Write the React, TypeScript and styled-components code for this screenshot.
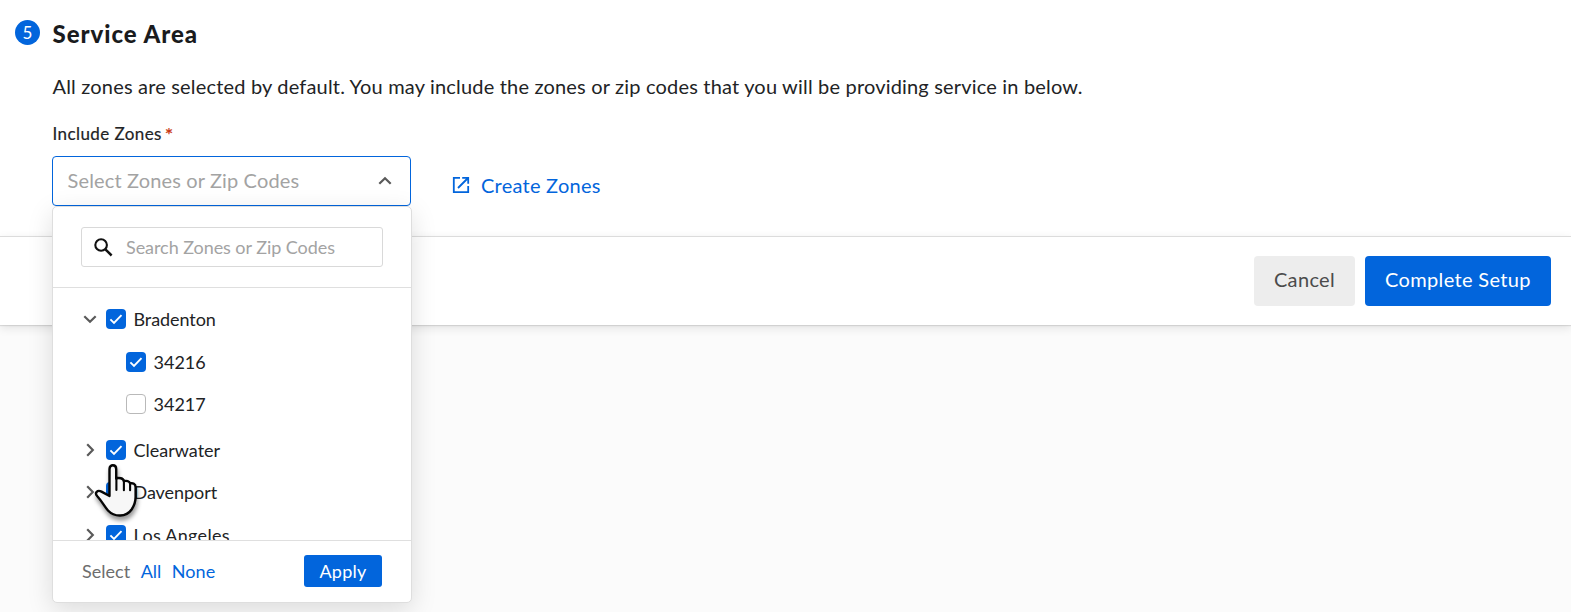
import React from 'react';
import styled, { createGlobalStyle } from 'styled-components';

const blue = '#0265dc';

const GlobalStyle = createGlobalStyle`
  * { box-sizing: border-box; }
  html, body { margin: 0; height: 100%; overflow: hidden; }
  body {
    background: #fbfbfb;
    color: #222325;
    font-family: Lato, 'Open Sans', sans-serif;
    font-size: 18px;
  }
  button, input { font: inherit; letter-spacing: inherit; }
`;

const Page = styled.main`
  height: 612px;
  display: flex;
  flex-direction: column;
  overflow: hidden;
`;

const Section = styled.section`
  height: 236px;
  flex: none;
  background: #fff;
  padding: 19px 15px 0;
  display: grid;
  grid-template-columns: 25px 1fr;
  column-gap: 12.5px;
  align-items: start;
`;

const StepBadge = styled.span`
  width: 25px;
  height: 25px;
  margin-top: 0.5px;
  border-radius: 50%;
  background: ${blue};
  color: #fff;
  display: grid;
  place-items: center;
  font-size: 17px;
  line-height: 25px;
`;

const Title = styled.h2`
  margin: 0;
  color: #1a1b1d;
  font-size: 24px;
  line-height: 30px;
  font-weight: 900;
  letter-spacing: 0.95px;
`;

const Description = styled.p`
  margin: 22px 0 0;
  font-size: 20px;
  line-height: 30px;
  letter-spacing: 0.18px;
  white-space: nowrap;
`;

const FieldLabel = styled.label`
  display: block;
  margin-top: 21px;
  font-size: 17px;
  line-height: 24px;
  letter-spacing: 0.42px;
  -webkit-text-stroke: 0.2px currentColor;
`;

const Required = styled.span`
  color: #c9310c;
  font-size: 20px;
  line-height: 1;
  margin-left: 3px;
  vertical-align: -1.5px;
`;

const FieldRow = styled.div`
  display: flex;
  align-items: flex-start;
  height: 50px;
  margin-top: 10px;
  margin-left: -0.5px;
`;

const SelectWrap = styled.div`
  position: relative;
  width: 359px;
`;

const SelectBox = styled.button`
  width: 100%;
  height: 50px;
  border: 1.5px solid ${blue};
  border-radius: 4px;
  background: #fff;
  padding: 0 18px 3px 14.5px;
  display: flex;
  align-items: center;
  justify-content: space-between;
  font-size: 20px;
  letter-spacing: 0.14px;
  color: #a3a3a3;

  svg { margin-top: 2px; }
`;

const CreateLink = styled.a`
  margin: 15px 0 0 41px;
  display: flex;
  align-items: center;
  gap: 11px;
  color: ${blue};
  font-size: 20px;
  line-height: 28px;
  letter-spacing: 0.25px;
`;

const Menu = styled.div`
  position: absolute;
  z-index: 2;
  top: 50px;
  left: 0;
  width: 360px;
  height: 397px;
  background: #fff;
  border: 1px solid #dedede;
  border-radius: 5px;
  box-shadow: 0 7px 26px rgba(0, 0, 0, 0.13);
  display: flex;
  flex-direction: column;
`;

const SearchArea = styled.div`
  flex: none;
  height: 81px;
  padding: 20px 28px 0;
  border-bottom: 1.5px solid #dfdfdf;
`;

const SearchField = styled.div`
  height: 40px;
  border: 1px solid #d9d9d9;
  border-radius: 3px;
  display: flex;
  align-items: center;
  gap: 13px;
  padding-left: 12px;
  color: #a3a3a3;
  letter-spacing: -0.06px;
`;

const ZoneList = styled.div`
  flex: 1;
  min-height: 0;
  overflow: hidden;
  padding-top: 10px;
`;

const ZipList = styled.div`
  padding-bottom: 3px;
`;

const Row = styled.div<{ $nested?: boolean; $tracking?: number }>`
  height: 42.5px;
  display: flex;
  align-items: center;
  padding-left: ${p => (p.$nested ? 73 : 28)}px;
  letter-spacing: ${p => p.$tracking ?? 0}px;
`;

const Toggle = styled.span`
  width: 18px;
  height: 18px;
  display: grid;
  place-items: center;
  margin-right: 7px;
`;

const Check = styled.span<{ $on: boolean }>`
  width: 20px;
  height: 20px;
  border-radius: 4px;
  margin-right: 7.5px;
  display: grid;
  place-items: center;
  background: ${p => (p.$on ? blue : '#fff')};
  border: ${p => (p.$on ? 'none' : '1.3px solid #b9b9b9')};
`;

const MenuFooter = styled.div`
  flex: none;
  height: 62px;
  border-top: 1.5px solid #dfdfdf;
  padding: 0 29px 1px;
  display: flex;
  align-items: center;
  color: #6d6d6d;
  letter-spacing: 0.02px;
`;

const Shortcut = styled.a`
  color: ${blue};
  margin-left: 10.5px;
`;

const Apply = styled.button`
  margin-left: auto;
  width: 78px;
  height: 32px;
  padding: 0;
  border: 0;
  border-radius: 3px;
  background: ${blue};
  color: #fff;
  letter-spacing: 0.25px;
`;

const ActionBar = styled.footer`
  flex: none;
  height: 89px;
  background: #fff;
  border-top: 1px solid #dcdcdc;
  box-shadow: 0 1px 1px rgba(0, 0, 0, 0.1), 0 3px 9px rgba(0, 0, 0, 0.1);
  display: flex;
  justify-content: flex-end;
  align-items: flex-start;
  gap: 10px;
  padding: 19px 20px 0;
`;

const ActionButton = styled.button<{ $primary?: boolean }>`
  height: 50px;
  width: ${p => (p.$primary ? 186 : 101)}px;
  padding: 0 0 4px;
  border: 0;
  border-radius: 4px;
  font-size: 20px;
  letter-spacing: 0.35px;
  background: ${p => (p.$primary ? blue : '#ededed')};
  color: ${p => (p.$primary ? '#fff' : '#4b4b4b')};
`;

const Cursor = styled.svg`
  position: absolute;
  z-index: 3;
  left: 37px;
  top: 253px;
  overflow: visible;
  filter: drop-shadow(1px 4px 2px rgba(0, 0, 0, 0.4));
`;

const Chevron = ({ dir }: { dir: 'up' | 'down' | 'right' }) => (
  <svg width="14" height="14" viewBox="0 0 14 14" fill="none" stroke="#5a5a5a" strokeWidth="2.2">
    <path d={{ up: 'M1.3 9.8 7 4.2l5.7 5.6', down: 'M1.3 4.2 7 9.8l5.7-5.6', right: 'M4.2 1.3 9.8 7l-5.6 5.7' }[dir]} />
  </svg>
);

const CheckBox = ({ on }: { on: boolean }) => (
  <Check $on={on}>
    {on && (
      <svg width="20" height="20" viewBox="0 0 20 20" fill="none" stroke="#fff" strokeWidth="1.9">
        <path d="m4.4 10.400 3.600 3.500 7.500-7.700" />
      </svg>
    )}
  </Check>
);

const SearchIcon = () => (
  <svg width="19" height="19" viewBox="0 0 19 19" fill="none" stroke="#111">
    <circle cx="7.1" cy="7" r="5.8" strokeWidth="2.1" />
    <path d="m11.4 11.3 6.2 6.2" strokeWidth="2.5" />
  </svg>
);

const OpenIcon = () => (
  <svg width="18" height="18" viewBox="0 0 18 18" fill="none" stroke={blue} strokeWidth="1.8">
    <path d="M8 1.8H1.8v14.4h14.4V10M10.2 1.8h6v6M16 2 6 12" />
  </svg>
);

const HandCursor = () => (
  <Cursor width="56" height="60" viewBox="0 0 56 60" stroke="#050505" strokeLinejoin="round" strokeLinecap="round">
    <path
      d="M19.5 36V9c0-5 6.7-5 6.7 0v9.500c2.500-1.100 7.200-.5 7.700 2.700 2.500-.8 5.500-.2 6.200 2.200 2.700-.7 5.500.5 5.500 3.800V37c0 5.500-1.700 9-4 12.500C36 57.500 24.500 57.300 18 50.500 14.500 46.800 12.500 42 7.300 36.300c-3.200-3.700.2-6.700 4.200-4.700Z"
      fill="#f7f7f7"
      strokeWidth="2.4"
    />
    <path d="M26.4 17v13M33.9 21.2V30.2M40.1 23.500V30.2" fill="none" strokeWidth="2.1" />
  </Cursor>
);

type Zone = { name: string; tracking: number; open?: boolean; zips?: { code: string; on: boolean }[] };

const zones: Zone[] = [
  { name: 'Bradenton', tracking: -0.08, open: true, zips: [{ code: '34216', on: true }, { code: '34217', on: false }] },
  { name: 'Clearwater', tracking: 0 },
  { name: 'Davenport', tracking: -0.06 },
  { name: 'Los Angeles', tracking: 0.3 },
];

export default function App() {
  return (
    <Page>
      <GlobalStyle />
      <Section>
        <StepBadge>5</StepBadge>
        <div>
          <Title>Service Area</Title>
          <Description>
            All zones are selected by default. You may include the zones or zip codes that you will be providing service in below.
          </Description>
          <FieldLabel>
            Include Zones<Required>*</Required>
          </FieldLabel>
          <FieldRow>
            <SelectWrap>
              <SelectBox>
                Select Zones or Zip Codes
                <Chevron dir="up" />
              </SelectBox>
              <Menu>
                <SearchArea>
                  <SearchField>
                    <SearchIcon />
                    <span>Search Zones or Zip Codes</span>
                  </SearchField>
                </SearchArea>
                <ZoneList>
                  {zones.map(z => (
                    <React.Fragment key={z.name}>
                      <Row $tracking={z.tracking}>
                        <Toggle><Chevron dir={z.open ? 'down' : 'right'} /></Toggle>
                        <CheckBox on />
                        {z.name}
                      </Row>
                      {z.open && (
                        <ZipList>
                          {z.zips?.map(zip => (
                            <Row key={zip.code} $nested>
                              <CheckBox on={zip.on} />
                              {zip.code}
                            </Row>
                          ))}
                        </ZipList>
                      )}
                    </React.Fragment>
                  ))}
                </ZoneList>
                <MenuFooter>
                  <span>Select</span>
                  <Shortcut>All</Shortcut>
                  <Shortcut>None</Shortcut>
                  <Apply>Apply</Apply>
                </MenuFooter>
                <HandCursor />
              </Menu>
            </SelectWrap>
            <CreateLink>
              <OpenIcon />
              Create Zones
            </CreateLink>
          </FieldRow>
        </div>
      </Section>
      <ActionBar>
        <ActionButton>Cancel</ActionButton>
        <ActionButton $primary>Complete Setup</ActionButton>
      </ActionBar>
    </Page>
  );
}
